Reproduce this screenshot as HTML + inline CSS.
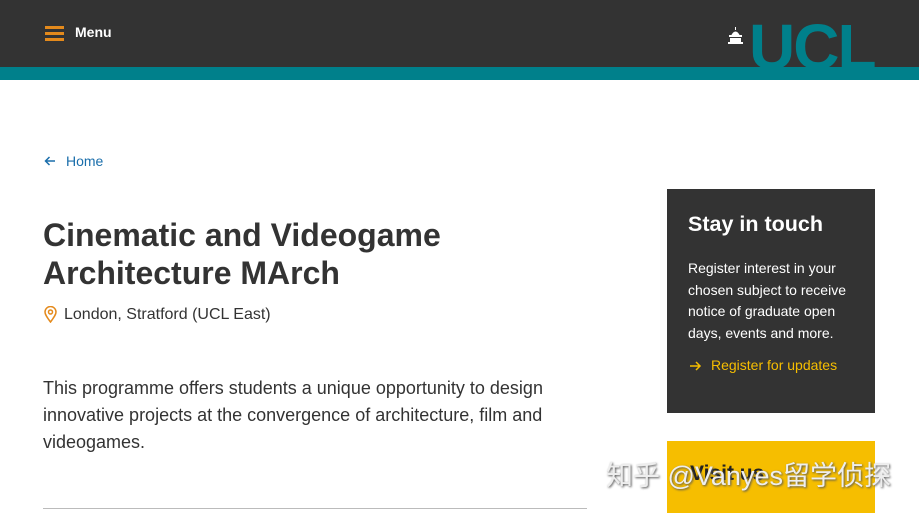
<!DOCTYPE html>
<html><head><meta charset="utf-8"><style>
body{margin:0;width:919px;height:513px;overflow:hidden;background:#fff;font-family:"Liberation Sans",Arial,sans-serif;position:relative}
.hdr{position:absolute;left:0;top:0;width:919px;height:67px;background:#333}
.bar{position:absolute;left:0;top:67px;width:919px;height:13px;background:#00808b}
.abs{position:absolute}
</style></head><body>
<div class="hdr"></div><div class="bar"></div>
<div class="abs" style="left:45px;top:26px;width:19px;height:3px;background:#e48a1c;box-shadow:0 6px 0 #e48a1c,0 12px 0 #e48a1c"></div>
<div class="abs" style="left:75px;top:24px;color:#fff;font-weight:bold;font-size:14px">Menu</div>
<svg class="abs" style="left:727px;top:27px" width="17" height="18" viewBox="0 0 17 18"><path d="M8.5 0v3M5 8q3.5-6 7 0z" fill="#fff" stroke="#fff"/><rect x="2" y="8" width="13" height="2" fill="#fff"/><rect x="3" y="11" width="11" height="4" fill="#fff"/><rect x="1" y="15" width="15" height="2" fill="#fff"/></svg>
<div class="abs" style="left:749px;top:12px;color:#00808b;font-weight:bold;font-size:64px;letter-spacing:-2px;line-height:70px;height:55px;overflow:hidden">UCL</div>
<svg class="abs" style="left:44px;top:155px" width="12" height="12" viewBox="0 0 12 12"><path d="M11 6H1.5M5.5 2L1.5 6l4 4" fill="none" stroke="#1a6eab" stroke-width="1.5"/></svg>
<div class="abs" style="left:66px;top:153px;color:#1a6eab;font-size:14px">Home</div>
<div class="abs" style="left:43px;top:216px;color:#333;font-weight:bold;font-size:32px;line-height:38px">Cinematic and Videogame<br>Architecture MArch</div>
<svg class="abs" style="left:44px;top:306px" width="13" height="17" viewBox="0 0 13 17"><path d="M6.5 16C2 10 1 8 1 6a5.5 5.5 0 0 1 11 0c0 2-1 4-5.5 10z" fill="none" stroke="#e48a1c" stroke-width="1.5"/><circle cx="6.5" cy="6" r="2" fill="none" stroke="#e48a1c" stroke-width="1.5"/></svg>
<div class="abs" style="left:64px;top:306px;color:#333;font-size:16px">London, Stratford (UCL East)</div>
<div class="abs" style="left:43px;top:375px;color:#333;font-size:18px;line-height:27px">This programme offers students a unique opportunity to design<br>innovative projects at the convergence of architecture, film and<br>videogames.</div>
<div class="abs" style="left:43px;top:508px;width:544px;height:1px;background:#bbb"></div>
<div class="abs" style="left:667px;top:189px;width:208px;height:224px;background:#333"></div>
<div class="abs" style="left:688px;top:212px;color:#fff;font-weight:bold;font-size:21.5px">Stay in touch</div>
<div class="abs" style="left:688px;top:258px;color:#fff;font-size:14px;line-height:21.5px">Register interest in your<br>chosen subject to receive<br>notice of graduate open<br>days, events and more.</div>
<svg class="abs" style="left:689px;top:360px" width="13" height="12" viewBox="0 0 13 12"><path d="M1 6h10M7 2l4 4-4 4" fill="none" stroke="#f6be00" stroke-width="1.5"/></svg>
<div class="abs" style="left:711px;top:357px;color:#f6be00;font-size:14px">Register for updates</div>
<div class="abs" style="left:667px;top:441px;width:208px;height:72px;background:#f6be00"></div>
<div class="abs" style="left:690px;top:462px;color:#222;font-weight:bold;font-size:21px">Visit us</div>
<div class="abs" style="left:606px;top:454px;color:#eee;font-size:27px;font-family:'Liberation Sans','Noto Sans CJK SC',sans-serif;text-shadow:1px 1px 2px #555">知乎 @Vanyes留学侦探</div>
</body></html>
